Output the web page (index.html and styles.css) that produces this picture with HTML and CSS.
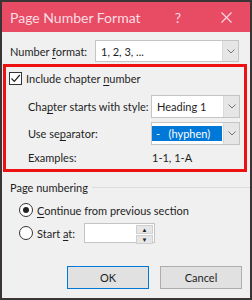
FILE: index.html
```html
<!DOCTYPE html>
<html lang="en">
<head>
  <meta charset="UTF-8" />
  <title>Page Number Format</title>
  <link rel="stylesheet" href="styles.css">
</head>
<body>
  <div class="dialog">
    <div class="titlebar">
      <span class="title">Page Number Format</span>
      <span class="help">?</span>
      <svg class="close" width="11" height="11" viewBox="0 0 11 11">
        <path d="M0.5 0.5 L10.5 10.5 M10.5 0.5 L0.5 10.5" stroke="#fbd6dc" stroke-width="1.2" fill="none" />
      </svg>
    </div>

    <div class="row format-row">
      <label class="format-label">Number <u>f</u>ormat:</label>
      <div class="select format-select">
        <span class="value">1, 2, 3, ...</span>
        <span class="arrow">
          <svg width="8" height="5" viewBox="0 0 8 5"><path d="M0.5 0.5 L4 4 L7.5 0.5" stroke="#777" fill="none" /></svg>
        </span>
      </div>
    </div>

    <div class="chapter-box">
      <div class="check-row">
        <span class="checkbox">
          <svg width="11" height="11" viewBox="0 0 11 11"><path d="M1.5 5.5 L4.3 8.3 L9.8 2" stroke="#222" stroke-width="1.2" fill="none" /></svg>
        </span>
        <span>Include chapter <u>n</u>umber</span>
      </div>
      <div class="field-row">
        <label class="field-label">Cha<u>p</u>ter starts with style:</label>
        <div class="select">
          <span class="value">Heading 1</span>
          <span class="arrow">
            <svg width="8" height="5" viewBox="0 0 8 5"><path d="M0.5 0.5 L4 4 L7.5 0.5" stroke="#777" fill="none" /></svg>
          </span>
        </div>
      </div>
      <div class="field-row sep-row">
        <label class="field-label">Use se<u>p</u>arator:</label>
        <div class="select">
          <span class="value selected">-&nbsp;&nbsp;&nbsp;(hyphen)</span>
          <span class="arrow">
            <svg width="8" height="5" viewBox="0 0 8 5"><path d="M0.5 0.5 L4 4 L7.5 0.5" stroke="#777" fill="none" /></svg>
          </span>
        </div>
      </div>
      <div class="field-row examples-row">
        <label class="field-label">Examples:</label>
        <span class="examples">1-1, 1-A</span>
      </div>
    </div>

    <div class="group-head">
      <span>Page numbering</span>
      <span class="rule"></span>
    </div>

    <div class="radio-row">
      <span class="radio checked"></span>
      <span><u>C</u>ontinue from previous section</span>
    </div>
    <div class="radio-row start-row">
      <span class="radio"></span>
      <span class="start-label">Start <u>a</u>t:</span>
      <div class="spin">
        <span class="spin-input"></span>
        <span class="spin-btns">
          <span class="spin-btn">&#9650;</span>
          <span class="spin-btn">&#9660;</span>
        </span>
      </div>
    </div>

    <div class="buttons">
      <button class="btn default">OK</button>
      <button class="btn">Cancel</button>
    </div>
  </div>
</body>
</html>
```

FILE: styles.css
```css
html, body {
  margin: 0;
  padding: 0;
  background: #f0f0f0;
  font-family: 'Lato', 'Open Sans', sans-serif;
  font-size: 11px;
  color: #1e1e1e;
  white-space: nowrap;
}

u {
  text-decoration: underline;
  text-underline-offset: 2px;
}

.dialog {
  width: 252px;
  height: 300px;
  box-sizing: border-box;
  border: 2px solid #3a3434;
  background: #f0f0f0;
  display: flex;
  flex-direction: column;
}

.titlebar {
  height: 30px;
  background: #e84c64;
  color: #fbdde2;
  display: flex;
  align-items: center;
  padding-left: 8px;
}

.title {
  font-size: 14px;
  flex: 1;
}

.help {
  font-size: 14px;
  margin-right: 40px;
}

.close {
  margin-right: 18px;
}

.row {
  display: flex;
  align-items: center;
}

.format-row {
  margin-top: 8px;
  padding-left: 8px;
}

.format-label {
  width: 85px;
}

.select {
  width: 89px;
  height: 23px;
  box-sizing: border-box;
  border: 1px solid #c4c4c4;
  background: #fff;
  display: flex;
  align-items: stretch;
}

.format-select {
  width: 144px;
  height: 22px;
}

.select .value {
  flex: 1;
  display: flex;
  align-items: center;
  padding-left: 5px;
}

.select .value.selected {
  margin: 3px 1px 3px 0;
  padding-left: 4px;
  background: #0078d7;
  color: #fff;
}

.select .arrow {
  width: 15px;
  background: #e6e6e6;
  border-left: 1px solid #dadada;
  display: flex;
  align-items: center;
  justify-content: center;
}

.chapter-box {
  margin: 2px 3px 0 1px;
  border: 3px solid #ee1111;
  padding: 5px 0 2px 3px;
}

.check-row {
  display: flex;
  align-items: center;
  height: 13px;
  gap: 4px;
}

.checkbox {
  width: 13px;
  height: 13px;
  box-sizing: border-box;
  border: 1px solid #333;
  background: #fff;
  display: flex;
  align-items: center;
  justify-content: center;
}

.field-row {
  display: flex;
  align-items: center;
  height: 23px;
  margin-top: 10px;
  padding-left: 19px;
}

.sep-row {
  margin-top: 4px;
}

.examples-row {
  margin-top: 2px;
  height: 20px;
}

.field-label {
  width: 123px;
}

.examples {
  padding-left: 1px;
}

.group-head {
  display: flex;
  align-items: center;
  height: 16px;
  margin-top: 7px;
  padding-left: 8px;
  gap: 4px;
}

.rule {
  flex: 1;
  height: 1px;
  background: #dcdcdc;
}

.radio-row {
  display: flex;
  align-items: center;
  height: 14px;
  margin-top: 8px;
  padding-left: 17px;
  gap: 4px;
}

.start-row {
  height: 20px;
  margin-top: 6px;
}

.radio {
  width: 14px;
  height: 14px;
  box-sizing: border-box;
  border: 1px solid #333;
  border-radius: 50%;
  background: #fff;
  display: flex;
  align-items: center;
  justify-content: center;
}

.radio.checked::after {
  content: '';
  width: 6px;
  height: 6px;
  border-radius: 50%;
  background: #222;
}

.start-label {
  width: 43px;
}

.spin {
  width: 71px;
  height: 20px;
  box-sizing: border-box;
  border: 1px solid #c4c4c4;
  background: #fff;
  display: flex;
}

.spin-input {
  flex: 1;
}

.spin-btns {
  width: 17px;
  display: flex;
  flex-direction: column;
  gap: 1px;
  padding: 1px 1px 1px 0;
}

.spin-btn {
  flex: 1;
  background: #e6e6e6;
  border: 1px solid #cfcfcf;
  font-size: 6px;
  color: #222;
  display: flex;
  align-items: center;
  justify-content: center;
}

.buttons {
  display: flex;
  justify-content: flex-end;
  gap: 11px;
  margin-top: 23px;
  padding-right: 8px;
}

.btn {
  width: 82px;
  height: 23px;
  box-sizing: border-box;
  border: 1px solid #adadad;
  background: #e1e1e1;
  font-family: inherit;
  font-size: 11px;
  color: #1e1e1e;
  padding: 0;
}

.btn.default {
  border: 1px solid #0078d7;
}
```
